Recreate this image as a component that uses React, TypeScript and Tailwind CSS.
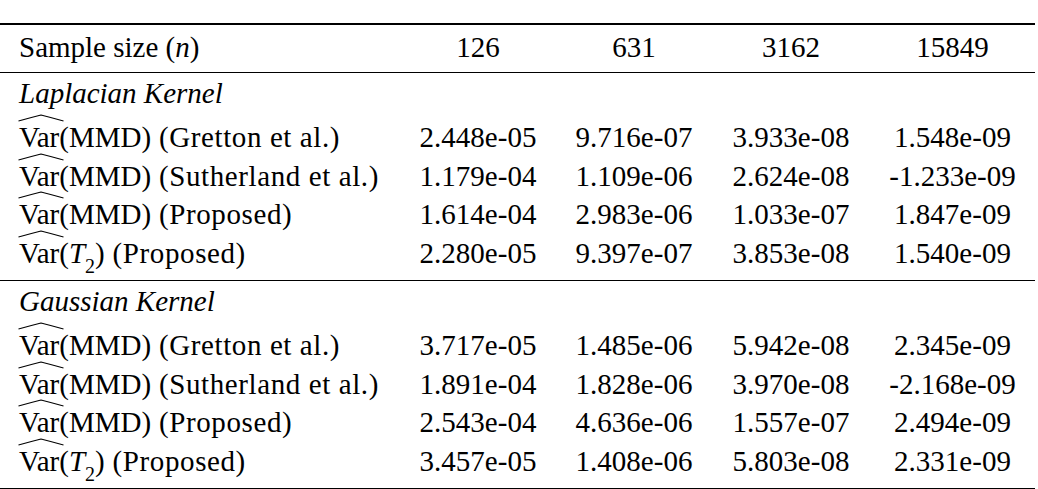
import React from 'react';

type Row = { label: React.ReactNode; values: string[] };

const Hat: React.FC = () => (
  <svg className="absolute left-[-1px] top-[-4px]" width="46" height="8" viewBox="0 0 46 8">
    <path d="M0.5 7 Q12 3.8 23 1 Q34 3.8 45.5 7" fill="none" stroke="#000" strokeWidth="1.1" />
  </svg>
);

const Var: React.FC<{ children: React.ReactNode }> = ({ children }) => (
  <>
    <span className="relative inline-block">
      Var
      <Hat />
    </span>
    ({children})
  </>
);

const T2 = (
  <>
    <span className="italic">T</span>
    <sub className="text-[20px] align-[-5px] leading-none">2</sub>
  </>
);

const Note: React.FC<{ children: React.ReactNode }> = ({ children }) => (
  <span className="tracking-[0.6px]"> {children}</span>
);

const laplacian: Row[] = [
  { label: <><Var>MMD</Var><Note>(Gretton et al.)</Note></>, values: ['2.448e-05', '9.716e-07', '3.933e-08', '1.548e-09'] },
  { label: <><Var>MMD</Var><Note>(Sutherland et al.)</Note></>, values: ['1.179e-04', '1.109e-06', '2.624e-08', '-1.233e-09'] },
  { label: <><Var>MMD</Var><Note>(Proposed)</Note></>, values: ['1.614e-04', '2.983e-06', '1.033e-07', '1.847e-09'] },
  { label: <><Var>{T2}</Var><Note>(Proposed)</Note></>, values: ['2.280e-05', '9.397e-07', '3.853e-08', '1.540e-09'] },
];

const gaussian: Row[] = [
  { label: <><Var>MMD</Var><Note>(Gretton et al.)</Note></>, values: ['3.717e-05', '1.485e-06', '5.942e-08', '2.345e-09'] },
  { label: <><Var>MMD</Var><Note>(Sutherland et al.)</Note></>, values: ['1.891e-04', '1.828e-06', '3.970e-08', '-2.168e-09'] },
  { label: <><Var>MMD</Var><Note>(Proposed)</Note></>, values: ['2.543e-04', '4.636e-06', '1.557e-07', '2.494e-09'] },
  { label: <><Var>{T2}</Var><Note>(Proposed)</Note></>, values: ['3.457e-05', '1.408e-06', '5.803e-08', '2.331e-09'] },
];

const grid = 'grid grid-cols-[381px_156px_156px_158px_165px] pl-[19px] leading-[38.5px] whitespace-nowrap';

const DataRow: React.FC<{ row: Row }> = ({ row }) => (
  <div className={grid}>
    <div>{row.label}</div>
    {row.values.map((v, i) => (
      <div key={i} className="text-center">{v}</div>
    ))}
  </div>
);

const Section: React.FC<{ title: string; rows: Row[] }> = ({ title, rows }) => (
  <div>
    <div className={`${grid} italic`}>
      <div>{title}</div>
    </div>
    <div className="mt-[5.5px]">
      {rows.map((r, i) => (
        <DataRow key={i} row={r} />
      ))}
    </div>
  </div>
);

export default function App() {
  return (
    <div className="w-[1038px] h-[489px] bg-white text-black text-[29px] pt-[23px] overflow-hidden font-serif">
      <div className="w-[1035px] font-['Liberation_Serif']">
        <div className="h-[2px] bg-black" />
        <div className={`${grid} pt-[3px] pb-[5.5px]`}>
          <div>
            Sample size (<span className="italic">n</span>)
          </div>
          <div className="text-center">126</div>
          <div className="text-center">631</div>
          <div className="text-center">3162</div>
          <div className="text-center">15849</div>
        </div>
        <div className="h-px bg-black" />
        <div className="pt-px pb-[8px]">
          <Section title="Laplacian Kernel" rows={laplacian} />
        </div>
        <div className="h-px bg-black" />
        <div className="pt-px pb-[8px]">
          <Section title="Gaussian Kernel" rows={gaussian} />
        </div>
        <div className="h-[2px] bg-black" />
      </div>
    </div>
  );
}
